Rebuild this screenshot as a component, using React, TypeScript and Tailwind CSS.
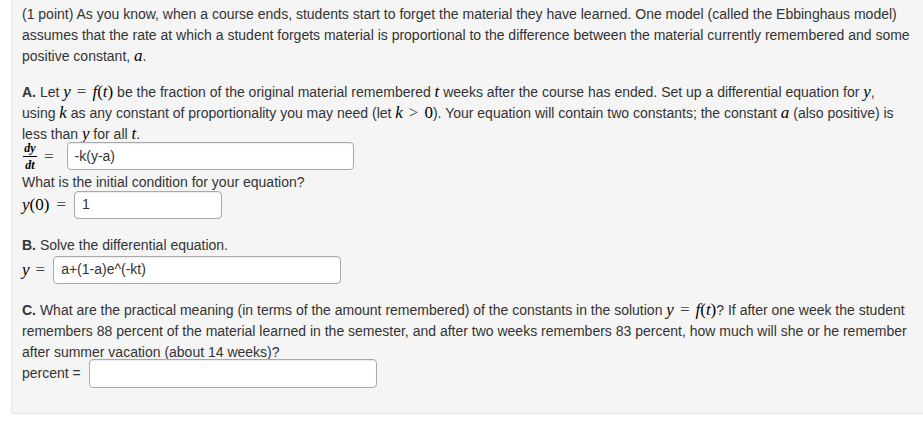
import React from 'react';

const sans = { fontFamily: '"Liberation Sans", Arial, sans-serif' };
const serif = { fontFamily: '"Liberation Serif", "Times New Roman", serif', fontSize: '17px' };

function V({ children }: { children: React.ReactNode }) {
  // italic math variable
  return <span className="italic text-black leading-none" style={serif}>{children}</span>;
}

function R({ children }: { children: React.ReactNode }) {
  return <span className="text-black leading-none" style={serif}>{children}</span>;
}

function Op({ children }: { children: React.ReactNode }) {
  return <span className="mx-[6px] text-[#444] leading-none" style={serif}>{children}</span>;
}

function Yft() {
  return (
    <>
      <V>y</V>
      <Op>=</Op>
      <V>f</V>
      <R>(</R>
      <V>t</V>
      <R>)</R>
    </>
  );
}

function AnswerBox({ value, width }: { value: string; width: string }) {
  return (
    <div
      className={`${width} h-[28px] flex items-center pl-[7px] bg-white border border-[#a9a9a9] rounded-[4px] shadow-[inset_0_1px_1px_rgba(0,0,0,0.08)] text-[14px] text-[#333]`}
      style={sans}
    >
      {value}
    </div>
  );
}

export default function App() {
  return (
    <div className="w-[923px] h-[426px] overflow-hidden bg-white">
      <div
        className="ml-[11px] w-[930px] bg-[#f5f5f5] border-l border-b border-[#e3e3e3] rounded-bl-[4px] pl-[10px] pt-[4px] pb-[25px] text-[14px] leading-[21px] text-[#333] whitespace-nowrap"
        style={sans}
      >
        <p>
          (1 point) As you know, when a course ends, students start to forget the material they have learned. One model (called the Ebbinghaus model)
          <br />
          assumes that the rate at which a student forgets material is proportional to the difference between the material currently remembered and some
          <br />
          positive constant, <V>a</V>.
        </p>

        <p className="mt-[15px]">
          <b>A.</b> Let <Yft /> be the fraction of the original material remembered <V>t</V> weeks after the course has ended. Set up a differential equation for <V>y</V>,
          <br />
          using <V>k</V> as any constant of proportionality you may need (let <V>k</V>
          <Op>&gt;</Op>
          <R>0</R>). Your equation will contain two constants; the constant <V>a</V> (also positive) is
          <br />
          less than <V>y</V> for all <V>t</V>.
        </p>

        <div className="mt-[-3px] flex items-center h-[28px]">
          <div className="ml-[1px] flex flex-col items-center w-[14px] text-black" style={{ fontFamily: '"Liberation Serif", serif' }}>
            <span className="italic font-bold text-[12px] leading-[12px]">dy</span>
            <span className="w-[14px] h-px bg-black my-[2px]" />
            <span className="italic font-bold text-[12px] leading-[12px]">dt</span>
          </div>
          <span className="ml-[7px] mr-[13px] text-[#444]" style={serif}>=</span>
          <AnswerBox value="-k(y-a)" width="w-[287px]" />
        </div>

        <p className="mt-[2px]">What is the initial condition for your equation?</p>

        <div className="mt-[-2.5px] flex items-center h-[28px]">
          <V>y</V>
          <R>(0)</R>
          <span className="ml-[7px] mr-[8px] text-[#444]" style={serif}>=</span>
          <AnswerBox value="1" width="w-[148px]" />
        </div>

        <p className="mt-[16.5px]">
          <b>B.</b> Solve the differential equation.
        </p>

        <div className="mt-[-0.5px] flex items-center h-[28px]">
          <V>y</V>
          <span className="ml-[6px] mr-[8px] text-[#444]" style={serif}>=</span>
          <AnswerBox value="a+(1-a)e^(-kt)" width="w-[288px]" />
        </div>

        <p className="mt-[16.5px]">
          <b>C.</b> What are the practical meaning (in terms of the amount remembered) of the constants in the solution <Yft />? If after one week the student
          <br />
          remembers 88 percent of the material learned in the semester, and after two weeks remembers 83 percent, how much will she or he remember
          <br />
          after summer vacation (about 14 weeks)?
        </p>

        <div className="mt-[-4.5px] flex items-center h-[29px]">
          <span className="mr-[8px]">percent =</span>
          <AnswerBox value="" width="w-[288px] h-[29px]" />
        </div>
      </div>
    </div>
  );
}
